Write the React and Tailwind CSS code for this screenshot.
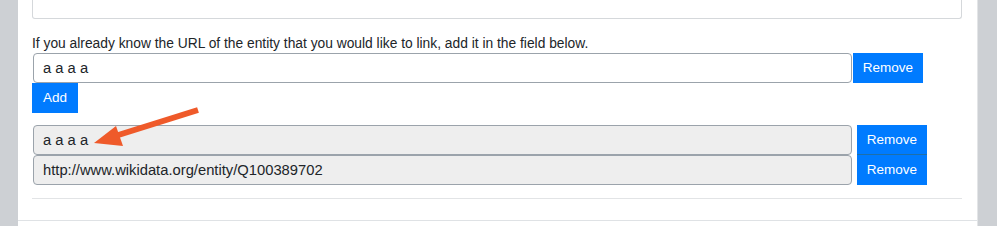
import React from "react";

const font = { fontFamily: '"Liberation Sans", Arial, Helvetica, sans-serif' };

const Btn = ({ children, className = "" }) => (
  <button
    className={`h-[30px] bg-[#007bff] text-white text-[13.5px] leading-none ${className}`}
  >
    {children}
  </button>
);

const ReadonlyRow = ({ value, last }) => (
  <div className="flex items-stretch">
    <div className="w-[819px] ml-px h-[30px] flex items-center px-[9px] bg-[#eeeeee] border border-[#9ba3ab] rounded-[4px] text-[14.75px] text-[#212529]">
      {value}
    </div>
    <Btn
      className={`w-[70px] ml-[5px] ${last ? "" : "border-b border-[#1f6fa8]"}`}
    >
      Remove
    </Btn>
  </div>
);

export default function App() {
  return (
    <div className="flex h-[226px] w-full overflow-hidden" style={font}>
      <div className="w-[18px] bg-[#cdd0d4]" />
      <div className="flex-1 bg-white relative">
        <div className="pl-[14px] pr-[15px]">
          <div className="h-[19px] border border-t-0 border-[#d5d8db] rounded-b-[3px]" />
          <p className="mt-[17px] text-[13.8px] leading-[16px] text-[#212529]">
            If you already know the URL of the entity that you would like to
            link, add it in the field below.
          </p>
          <div className="flex mt-px">
            <div className="w-[819px] ml-px h-[30px] flex items-center px-[9px] bg-white border border-[#9ba3ab] rounded-[4px] text-[14.75px] text-[#212529]">
              a a a a
            </div>
            <Btn className="w-[70px] ml-px">Remove</Btn>
          </div>
          <Btn className="w-[46px]">Add</Btn>
          <div className="mt-[12px] flex flex-col">
            <ReadonlyRow value="a a a a" />
            <ReadonlyRow value="http://www.wikidata.org/entity/Q100389702" last />
          </div>
          <div className="mt-[13px] h-px bg-[#e2e4e6]" />
        </div>
        <div className="mt-[21px] h-px bg-[#dfe2e5]" />
        <svg
          className="absolute left-0 top-0 pointer-events-none"
          width="220"
          height="160"
          viewBox="18 0 220 160"
        >
          <line
            x1="198"
            y1="110"
            x2="112"
            y2="137"
            stroke="#ef5a2a"
            strokeWidth="6"
            strokeLinecap="butt"
          />
          <polygon points="94,143 116,126 123,146" fill="#ef5a2a" />
        </svg>
      </div>
      <div className="w-[20px] bg-[#cdd0d4] border-l border-[#e3e5e7]" />
    </div>
  );
}
